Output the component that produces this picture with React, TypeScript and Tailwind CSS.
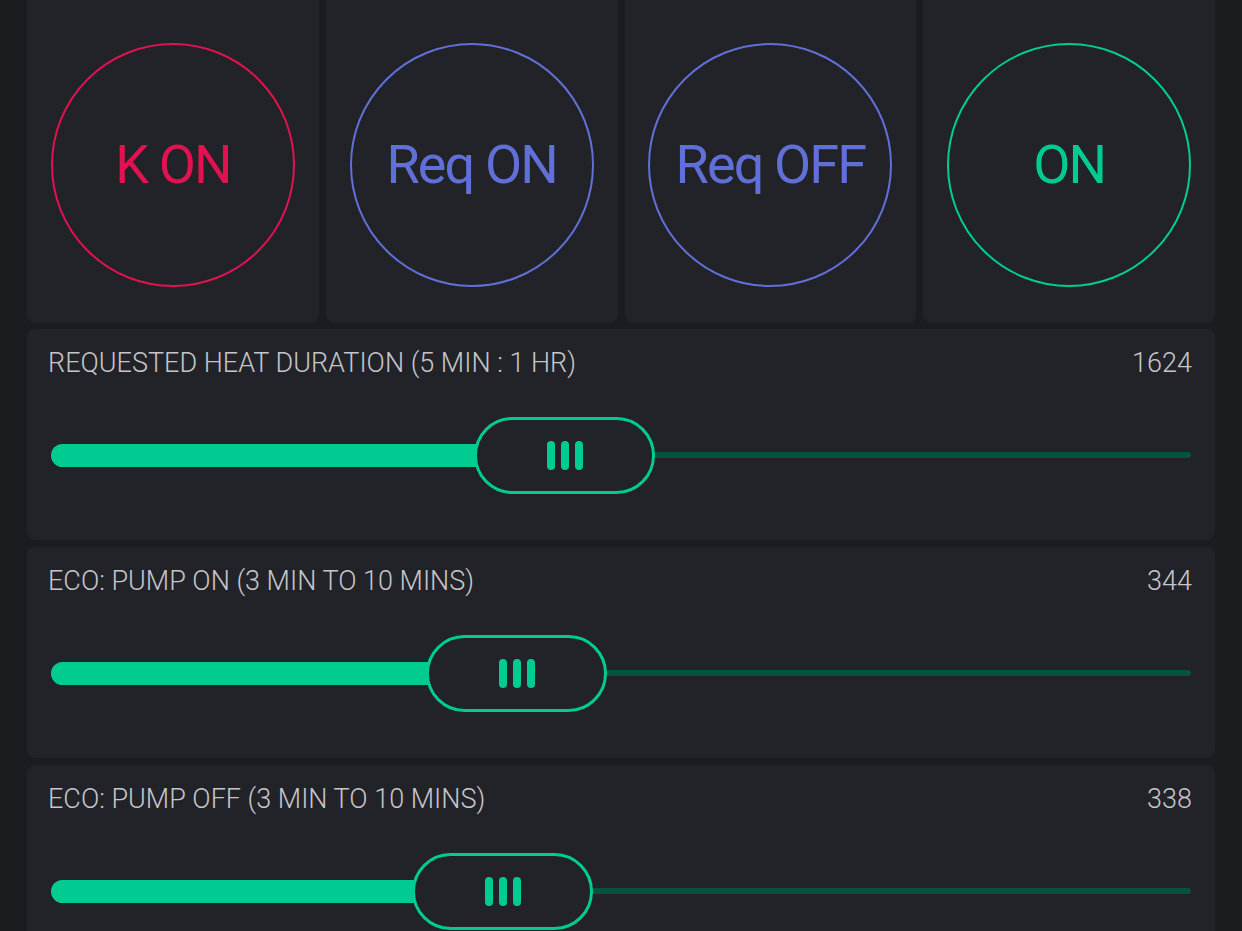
import React from 'react';

const buttons = [
  { label: 'K ON', ring: 'border-[#e0124f]', text: 'text-[#e0124f]' },
  { label: 'Req ON', ring: 'border-[#6170d8]', text: 'text-[#6170d8]' },
  { label: 'Req OFF', ring: 'border-[#6170d8]', text: 'text-[#6170d8]' },
  { label: 'ON', ring: 'border-[#00cc92]', text: 'text-[#00cc92]' },
];

const sliders = [
  { title: 'REQUESTED HEAT DURATION (5 MIN : 1 HR)', value: 1624, thumb: 423 },
  { title: 'ECO: PUMP ON (3 MIN TO 10 MINS)', value: 344, thumb: 375 },
  { title: 'ECO: PUMP OFF (3 MIN TO 10 MINS)', value: 338, thumb: 361 },
];

function Slider({ title, value, thumb }: { title: string; value: number; thumb: number }) {
  return (
    <div className="bg-[#222328] rounded-lg h-[211px] pt-[21px] flex flex-col">
      <div className="flex items-center justify-between pl-[21px] pr-[23px] h-[26px] text-[27px] leading-[26px] font-light text-[#c6c6ca]">
        <span>{title}</span>
        <span>{value}</span>
      </div>
      <div className="relative mx-[24px] mt-[41px] h-[77px]">
        {/* empty part of the track */}
        <div className="absolute left-0 right-0 top-[35px] h-[6px] rounded-full bg-[#04533f]" />
        {/* filled part */}
        <div
          className="absolute left-0 top-[27px] h-[23px] rounded-l-full bg-[#00cc92]"
          style={{ width: thumb + 20 }}
        />
        <div
          className="absolute top-0 h-[77px] w-[181px] rounded-full border-[3px] border-[#00cc92] bg-[#222328] flex items-center justify-center gap-[6px]"
          style={{ left: thumb }}
        >
          <span className="w-[8px] h-[29px] rounded-full bg-[#00cc92]" />
          <span className="w-[8px] h-[29px] rounded-full bg-[#00cc92]" />
          <span className="w-[8px] h-[29px] rounded-full bg-[#00cc92]" />
        </div>
      </div>
    </div>
  );
}

export default function App() {
  return (
    <div className="min-h-screen bg-[#1b1c20] px-[27px] pb-[20px] font-['Roboto',sans-serif] overflow-hidden">
      <div className="grid grid-cols-4 gap-[7px]">
        {buttons.map((b) => (
          <div key={b.label} className="bg-[#222328] rounded-b-lg h-[323px] pt-[43px] flex justify-center">
            <div
              className={`w-[244px] h-[244px] rounded-full border-2 ${b.ring} flex items-center justify-center`}
            >
              <span className={`text-[54px] leading-none tracking-[-0.035em] ${b.text}`}>{b.label}</span>
            </div>
          </div>
        ))}
      </div>
      <div className="flex flex-col gap-[7px] mt-[6px]">
        {sliders.map((s) => (
          <Slider key={s.title} {...s} />
        ))}
      </div>
    </div>
  );
}
